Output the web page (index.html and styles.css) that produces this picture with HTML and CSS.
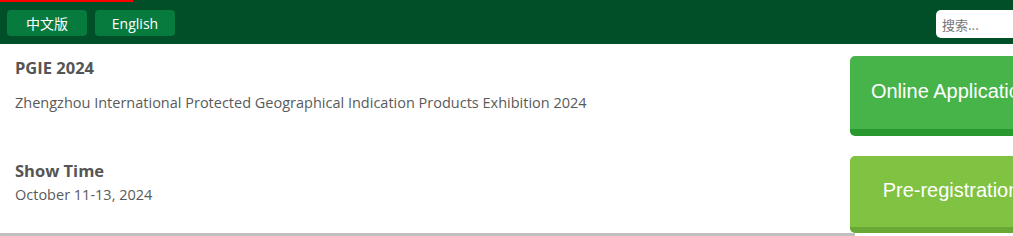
FILE: index.html
```html
<!DOCTYPE html>
<html lang="en">
<head>
<meta charset="utf-8">
<title>PGIE 2024</title>
<link rel="stylesheet" href="styles.css">
</head>
<body>
<div class="page">
  <header class="topbar">
    <span class="topline"></span>
    <nav class="langs">
      <a class="lang" href="#">中文版</a>
      <a class="lang" href="#">English</a>
    </nav>
    <input class="search" type="text" placeholder="搜索...">
  </header>
  <main class="content">
    <section class="info">
      <div class="block">
        <h2 class="title">PGIE 2024</h2>
        <p class="desc">Zhengzhou International Protected Geographical Indication Products Exhibition 2024</p>
      </div>
      <div class="block second">
        <h2 class="title">Show Time</h2>
        <p class="desc date">October 11-13, 2024</p>
      </div>
    </section>
    <aside class="actions">
      <a class="btn btn-apply" href="#">Online Application</a>
      <a class="btn btn-pre" href="#">Pre-registration</a>
    </aside>
  </main>
</div>
</body>
</html>
```
FILE: styles.css
```css
html, body {
  margin: 0;
  padding: 0;
  background: #ffffff;
  overflow: hidden;
}
.page {
  width: 1013px;
  overflow: hidden;
  font-family: "Open Sans", "Noto Sans CJK SC", sans-serif;
}
.topbar {
  position: relative;
  height: 44px;
  background: #004f28;
  display: flex;
  align-items: flex-start;
  justify-content: space-between;
}
.topline {
  position: absolute;
  left: 0;
  top: 0;
  width: 133px;
  height: 2px;
  background: #ff0000;
}
.langs {
  display: flex;
  gap: 8px;
  padding: 10px 0 0 7px;
}
.lang {
  display: flex;
  align-items: center;
  justify-content: center;
  width: 80px;
  height: 26px;
  border-radius: 4px;
  background: #077a3e;
  color: #ffffff;
  text-decoration: none;
  font-size: 14px;
  font-family: "Open Sans", "Noto Sans CJK SC", sans-serif;
}
.search {
  margin-top: 10px;
  width: 80px;
  height: 28px;
  box-sizing: border-box;
  border: none;
  border-radius: 5px 0 0 5px;
  padding: 0 6px;
  font-size: 13px;
  font-family: "Noto Sans CJK SC", sans-serif;
  color: #333;
  outline: none;
  margin-right: -3px;
}
.search::placeholder {
  color: #757575;
}
.content {
  display: flex;
  align-items: flex-start;
  position: relative;
  height: 192px;
}
.content::after {
  content: "";
  position: absolute;
  left: 0;
  bottom: 0;
  width: 855px;
  height: 3px;
  background: #c0c0c0;
}
.info {
  width: 850px;
  flex: none;
  padding: 0 0 0 15px;
  box-sizing: border-box;
  color: #555555;
}
.block {
  padding-top: 12px;
}
.block.second {
  padding-top: 45px;
}
.title {
  margin: 0;
  font-size: 16.5px;
  font-weight: 700;
  line-height: 24px;
  color: #555555;
}
.desc {
  margin: 12px 0 0;
  font-size: 14.5px;
  line-height: 22px;
  color: #5a5a5a;
}
.date {
  margin-top: 1px;
}
.actions {
  flex: none;
  display: flex;
  flex-direction: column;
  gap: 20px;
  padding-top: 12px;
}
.btn {
  display: flex;
  align-items: center;
  justify-content: center;
  width: 202px;
  box-sizing: border-box;
  border-radius: 5px;
  color: #ffffff;
  text-decoration: none;
  font-family: "Liberation Sans", Arial, sans-serif;
  font-size: 20px;
  padding-bottom: 2px;
}
.btn-apply {
  height: 80px;
  background: #46b449;
  border-bottom: 7px solid #28992e;
}
.btn-pre {
  height: 77px;
  background: #80c241;
  border-bottom: 6px solid #69a835;
}
```
